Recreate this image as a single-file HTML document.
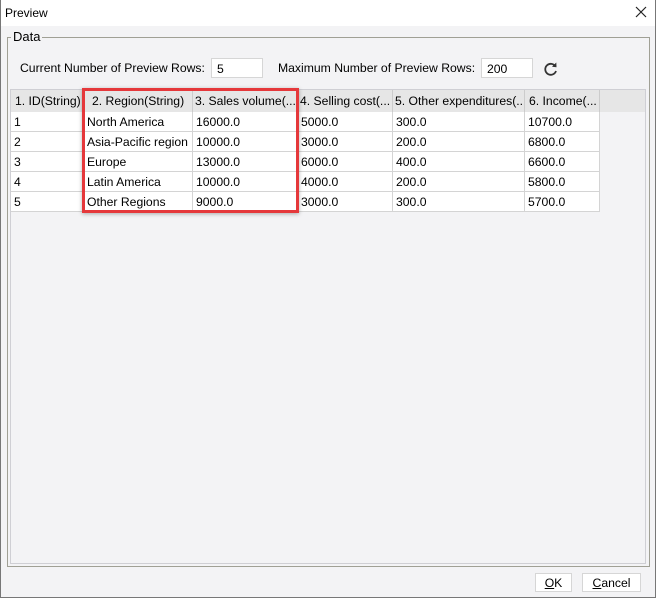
<!DOCTYPE html>
<html><head><style>
*{box-sizing:border-box;margin:0;padding:0}
body{width:656px;height:598px;background:#f3f3f5;font-family:"Liberation Sans",Arial,sans-serif;font-size:12px;color:#000;position:relative;overflow:hidden}
.win{position:absolute;left:0;top:0;width:656px;height:598px;border-left:1px solid #777;border-right:1px solid #777;border-bottom:1px solid #777}
.title{position:absolute;left:1px;top:0;width:654px;height:26px;background:#fff}
.title span{position:absolute;left:4px;top:6px;font-size:12px}
.x{position:absolute;left:634px;top:6px}
.group{position:absolute;left:7px;top:37px;width:643px;height:530px;border:1px solid #a0a095}
.legend{position:absolute;left:11px;top:29px;background:#f3f3f5;padding:0 2px;font-size:13px}
.lbl{position:absolute;top:61px;font-size:12.2px}
.inp{position:absolute;top:58px;height:20px;background:#fff;border:1px solid #d6d6d6;padding:3px 5px;font-size:12.2px}
.tbl{position:absolute;left:10px;top:89px;width:636px;height:475px;border:1px solid #cfcfd4;background:#f3f3f5}
.hdr{position:absolute;left:0;top:0;width:634px;height:22px;background:#e6e6e6}
.c{position:absolute;height:20px;padding:3px 0 0 3px;font-size:12.2px;white-space:nowrap;overflow:hidden;border-right:1px solid #d4d4d4;border-bottom:1px solid #d4d4d4;background:#fff}
.h{position:absolute;top:0;height:22px;padding:4px 0 0 4px;font-size:12.2px;white-space:nowrap;overflow:hidden;border-right:1px solid #ccc;background:#e6e6e6}
.btn{position:absolute;top:573px;height:19px;background:#fff;border:1px solid #d6d6d6;font-size:12.2px;text-align:center;padding-top:2px}
.red{position:absolute;left:82px;top:88px;width:217px;height:125px;border:3px solid #e5383b;box-shadow:0 1px 4px rgba(0,0,0,.3)}
</style></head><body>
<div class="win"></div>
<div class="title"><span>Preview</span>
<svg class="x" width="12" height="12" viewBox="0 0 12 12"><path d="M1 1L11 11M11 1L1 11" stroke="#222" stroke-width="1.2"/></svg></div>
<div class="group"></div>
<div class="legend">Data</div>
<div class="lbl" style="left:20px">Current Number of Preview Rows:</div>
<div class="inp" style="left:211px;width:52px">5</div>
<div class="lbl" style="left:278px">Maximum Number of Preview Rows:</div>
<div class="inp" style="left:481px;width:52px">200</div>
<svg style="position:absolute;left:543px;top:61px" width="16" height="16" viewBox="0 0 16 16"><path d="M12.5 5.5A5.5 5.5 0 1 0 13 10" fill="none" stroke="#333" stroke-width="1.8"/><path d="M9 5.8L13.5 6.2L13.3 1.5Z" fill="#333"/></svg>
<div class="tbl">
<div class="hdr"></div>
<div class="h" style="left:0;width:73px">1. ID(String)</div>
<div class="h" style="left:73px;width:109px;padding-left:8px">2. Region(String)</div>
<div class="h" style="left:182px;width:105px;padding-left:2px">3. Sales volume(...</div>
<div class="h" style="left:287px;width:95px;padding-left:2px">4. Selling cost(...</div>
<div class="h" style="left:382px;width:132px;padding-left:2px">5. Other expenditures(...</div>
<div class="h" style="left:514px;width:75px;padding-left:4px">6. Income(...</div>
</div>
<div id="rows"></div>
<div class="red"></div>
<div class="btn" style="left:535px;width:37px"><u>O</u>K</div>
<div class="btn" style="left:582px;width:59px"><u>C</u>ancel</div>
<script>
var d=[["1","North America","16000.0","5000.0","300.0","10700.0"],["2","Asia-Pacific region","10000.0","3000.0","200.0","6800.0"],["3","Europe","13000.0","6000.0","400.0","6600.0"],["4","Latin America","10000.0","4000.0","200.0","5800.0"],["5","Other Regions","9000.0","3000.0","300.0","5700.0"]];
var xs=[11,84,193,298,393,525,600],h="";
d.forEach(function(r,i){r.forEach(function(v,j){h+='<div class="c" style="top:'+(112+i*20)+'px;left:'+xs[j]+'px;width:'+(xs[j+1]-xs[j])+'px">'+v+'</div>';});});
document.getElementById("rows").innerHTML=h;
</script>
</body></html>
